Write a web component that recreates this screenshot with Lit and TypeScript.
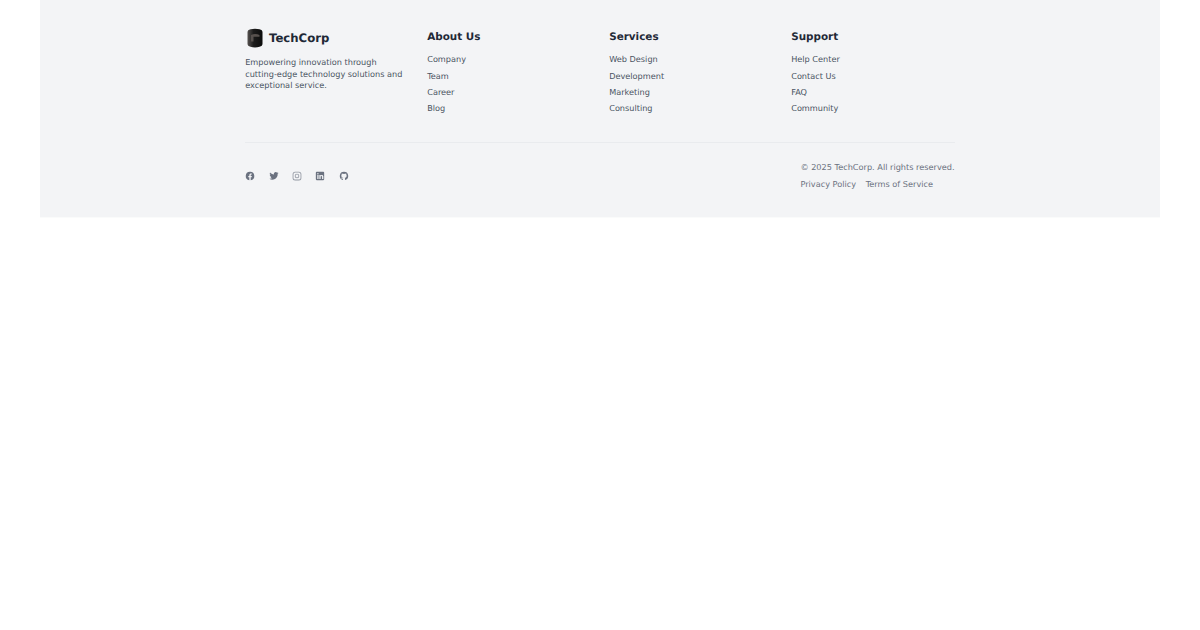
import { LitElement, html, css, svg } from 'lit';
import { customElement } from 'lit/decorators.js';

const columns = [
    { title: 'About Us', links: ['Company', 'Team', 'Career', 'Blog'] },
    { title: 'Services', links: ['Web Design', 'Development', 'Marketing', 'Consulting'] },
    { title: 'Support', links: ['Help Center', 'Contact Us', 'FAQ', 'Community'] },
];

const socials = [
    svg`<path d="M12 2a10 10 0 0 0-1.6 19.900v-7H7.900V12h2.500V9.800c0-2.500 1.500-3.900 3.800-3.900 1.100 0 2.200.2 2.200.2v2.500h-1.200c-1.200 0-1.600.8-1.600 1.600V12h2.800l-.4 2.900h-2.300v7A10 10 0 0 0 12 2z"/>`,
    svg`<path d="M23 4.900c-.8.4-1.700.6-2.600.8.9-.6 1.600-1.400 2-2.500-.9.5-1.900.9-2.900 1.100a4.500 4.500 0 0 0-7.800 4.100C8 8.200 4.700 6.400 2.500 3.700c-1.200 2.100-.6 4.700 1.400 6-.7 0-1.400-.2-2-.6 0 2.200 1.500 4.100 3.600 4.500-.7.2-1.400.2-2 .1.600 1.800 2.300 3.100 4.200 3.100A9.100 9.100 0 0 1 1 18.700 12.900 12.900 0 0 0 20.800 7.200c.9-.6 1.600-1.400 2.200-2.300z"/>`,
    svg`<path opacity=".7" fill-rule="evenodd" d="M7.500 1.500h9a6 6 0 0 1 6 6v9a6 6 0 0 1-6 6h-9a6 6 0 0 1-6-6v-9a6 6 0 0 1 6-6zm0 2a4 4 0 0 0-4 4v9a4 4 0 0 0 4 4h9a4 4 0 0 0 4-4v-9a4 4 0 0 0-4-4zM12 6.500a5.500 5.500 0 1 1 0 11 5.500 5.500 0 0 1 0-11zm0 2a3.500 3.500 0 1 0 0 7 3.500 3.500 0 0 0 0-7z"/>`,
    svg`<path fill-rule="evenodd" d="M4 2h16a2 2 0 0 1 2 2v16a2 2 0 0 1-2 2H4a2 2 0 0 1-2-2V4a2 2 0 0 1 2-2zm1.500 7.500V19h3V9.500zM7 5a1.700 1.700 0 1 0 0 3.400A1.700 1.700 0 0 0 7 5zm3.500 4.500V19h3v-5c0-1.300.6-2.200 1.800-2.200s1.700.9 1.700 2.200v5h3v-5.800c0-2.600-1.500-3.900-3.500-3.900-1.400 0-2.400.7-3 1.600V9.500z"/>`,
    svg`<path d="M12 2a10 10 0 0 0-3.200 19.500c.5.100.7-.2.700-.5v-1.900c-2.800.6-3.400-1.200-3.400-1.200-.5-1.200-1.100-1.500-1.100-1.500-.9-.6.100-.6.100-.6 1 .1 1.500 1 1.500 1 .9 1.500 2.300 1.100 2.900.8.100-.6.300-1.100.6-1.300-2.200-.3-4.500-1.100-4.500-5 0-1.100.4-2 1-2.700-.1-.3-.4-1.300.1-2.600 0 0 .8-.3 2.800 1a9.500 9.500 0 0 1 5 0c1.900-1.300 2.700-1 2.700-1 .6 1.300.2 2.300.1 2.600.7.700 1 1.600 1 2.700 0 3.900-2.300 4.700-4.500 5 .4.300.7.900.7 1.900V21c0 .3.200.6.700.5A10 10 0 0 0 12 2z"/>`,
];

@customElement('app-root')
export class AppRoot extends LitElement {
    static styles = css`
    :host {
      display: block;
      min-height: 630px;
      background: #fff;
      font-family: 'DejaVu Sans', sans-serif;
      text-rendering: geometricPrecision;
      padding: 0 40px;
      box-sizing: border-box;
    }

    footer {
      background: #f3f4f6;
      box-shadow: 0 1px 0 rgba(243, 244, 246, 0.4);
      height: 217px;
      padding: 28px 205.4px 0 205.2px;
      box-sizing: border-box;
    }

    .top {
      display: grid;
      grid-template-columns: repeat(4, 1fr);
      column-gap: 18.6px;
      height: 115px;
      border-bottom: 1px solid #e9ebee;
      box-sizing: border-box;
    }

    .brand {
      display: flex;
      align-items: center;
      gap: 5.8px;
      height: 19px;
      font-size: 11.7px;
      font-weight: 700;
      color: #1f2937;
    }

    .logo {
      width: 18px;
      height: 20px;
      display: block;
      flex: none;
    }

    .tagline {
      margin: 10px 0 0;
      font-size: 8.18px;
      line-height: 11.7px;
      color: #4b5563;
    }

    h3 {
      margin: 0;
      font-size: 10.4px;
      line-height: 16px;
      font-weight: 700;
      color: #1f2937;
      padding-top: 1px;
    }

    ul {
      list-style: none;
      margin: 8.2px 0 0;
      padding: 0;
      display: grid;
      row-gap: 4.35px;
    }

    li {
      font-size: 8.16px;
      line-height: 12px;
      color: #4b5563;
    }

    .bottom {
      display: flex;
      justify-content: space-between;
      align-items: center;
      padding-top: 18.2px;
    }

    .socials {
      display: flex;
      gap: 13.4px;
      margin-top: 1px;
      color: #6b7280;
    }

    .socials svg {
      width: 10px;
      height: 10px;
      display: block;
      fill: currentColor;
    }

    .legal {
      font-size: 8.18px;
      line-height: 12px;
      color: #6b7280;
    }

    .legal-links {
      display: flex;
      gap: 9.6px;
      margin-top: 4.4px;
    }
  `;

    render() {
        return html`
      <footer>
        <div class="top">
          <div>
            <div class="brand">
              <svg class="logo" viewBox="-1 0 18 20">
                <defs>
                  <linearGradient id="shell" x1="0" y1="0" x2="1" y2="0">
                    <stop offset="0" stop-color="#55514f" />
                    <stop offset=".4" stop-color="#1c1c1c" />
                    <stop offset="1" stop-color="#0c0c0c" />
                  </linearGradient>
                </defs>
                <path fill="url(#shell)" d="M4.500 1.300C7 .4 11 .4 13.500 1.300c2 .6 3 1.300 3 3v11.400c0 1.700-1 2.400-3 3-2.500.9-6.500.9-9 0-2-.6-3-1.300-3-3V4.300c0-1.700 1-2.400 3-3z" />
                <path fill="#57514e" d="M5 7c2.500-1.500 6-1.500 8.500 0v1.800H7.500v4.700H5z" />
              </svg>
              TechCorp
            </div>
            <p class="tagline">Empowering innovation through cutting-edge technology solutions and exceptional service.</p>
          </div>
          ${columns.map((col) => html`
            <div>
              <h3>${col.title}</h3>
              <ul>
                ${col.links.map((link) => html`<li>${link}</li>`)}
              </ul>
            </div>
          `)}
        </div>
        <div class="bottom">
          <div class="socials">
            ${socials.map((icon) => html`<svg viewBox="0 0 24 24">${icon}</svg>`)}
          </div>
          <div class="legal">
            <div>© 2025 TechCorp. All rights reserved.</div>
            <div class="legal-links"><span>Privacy Policy</span><span>Terms of Service</span></div>
          </div>
        </div>
      </footer>
    `;
    }
}
